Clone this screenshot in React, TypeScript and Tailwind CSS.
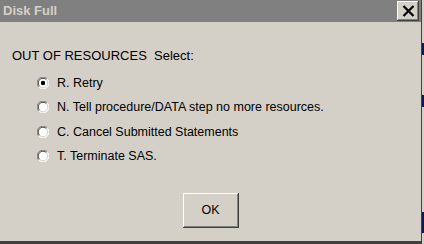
import React from "react";

const options = [
  { key: "R", label: "R. Retry", checked: true },
  { key: "N", label: "N. Tell procedure/DATA step no more resources.", checked: false },
  { key: "C", label: "C. Cancel Submitted Statements", checked: false },
  { key: "T", label: "T. Terminate SAS.", checked: false },
];

function Radio({ checked }: { checked: boolean }) {
  return (
    <svg width="12" height="12" viewBox="0 0 12 12" className="shrink-0">
      <circle cx="6" cy="6" r="5.5" fill="#ffffff" />
      <path d="M10.2 1.8 A5.5 5.5 0 0 0 1.8 10.2" stroke="#808080" strokeWidth="1" fill="none" />
      <path d="M9.4 2.6 A4.5 4.5 0 0 0 2.6 9.4" stroke="#404040" strokeWidth="1" fill="none" />
      <path d="M1.8 10.2 A5.5 5.5 0 0 0 10.2 1.8" stroke="#ffffff" strokeWidth="1" fill="none" />
      <path d="M2.6 9.4 A4.5 4.5 0 0 0 9.4 2.6" stroke="#d4d0c8" strokeWidth="1" fill="none" />
      {checked && <circle cx="6" cy="6" r="2.2" fill="#000000" />}
    </svg>
  );
}

function CloseButton() {
  return (
    <button className="flex h-[20px] w-[22px] items-center justify-center bg-[#d4d0c8] shadow-[inset_-1px_-1px_#404040,inset_1px_1px_#ffffff,inset_-2px_-2px_#808080]">
      <svg width="13" height="12" viewBox="0 0 13 12">
        <path d="M1.5 1 L11.5 11 M11.5 1 L1.5 11" stroke="#000000" strokeWidth="2.2" />
      </svg>
    </button>
  );
}

export default function App() {
  return (
    <div className="flex h-[244px] w-[424px] bg-[#d4d0c8] font-['Liberation_Sans',Arial,sans-serif]">
      <div className="flex w-[422px] flex-col border-r border-r-[#404040] border-b-[3px] border-b-[#404040]">
        <div className="flex h-[22px] items-center justify-between bg-[#808080] pl-[3px] pr-[2px]">
          <span className="text-[13px] font-bold text-[#d4d0c8]">Disk Full</span>
          <CloseButton />
        </div>
        <div className="flex flex-1 flex-col pl-[12px] pt-[27px] text-[12.5px] text-black">
          <div className="h-[14px] whitespace-pre text-[13px] leading-[14px]">OUT OF RESOURCES  Select:</div>
          <div className="mt-[13px] flex flex-col gap-[10.3px] pl-[25px]">
            {options.map((o) => (
              <div key={o.key} className="flex h-[14px] items-center gap-[8px] leading-[14px]">
                <Radio checked={o.checked} />
                <span>{o.label}</span>
              </div>
            ))}
          </div>
          <div className="mt-[30px] flex justify-center pr-[12px]">
            <button className="h-[35px] w-[56px] bg-[#d4d0c8] text-[12.5px] shadow-[inset_-1px_-1px_#404040,inset_1px_1px_#ffffff,inset_-2px_-2px_#808080]">
              OK
            </button>
          </div>
        </div>
      </div>
      <div className="flex w-[2px] flex-col">
        <div className="h-[43px]" />
        <div className="h-[12px] bg-[#0a1a5c]" />
        <div className="h-[40px]" />
        <div className="h-[12px] bg-[#0a1a5c]" />
        <div className="h-[105px]" />
        <div className="h-[21px] bg-[#0a1a5c]" />
      </div>
    </div>
  );
}
